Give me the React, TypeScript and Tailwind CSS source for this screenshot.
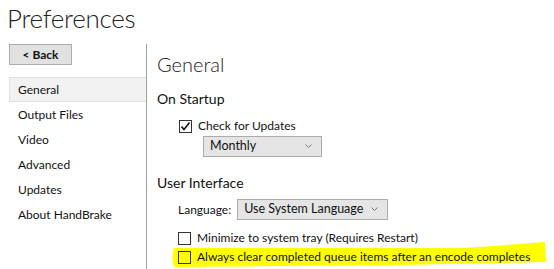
import React from "react";

const font = { fontFamily: 'Lato, "Noto Sans", sans-serif' };

function Check({ checked }: { checked?: boolean }) {
  return (
    <div className="w-[13px] h-[13px] border border-[#333] flex items-center justify-center shrink-0">
      {checked && (
        <svg width="11" height="11" viewBox="0 0 11 11">
          <path d="M1.5 5.5 L4 8.5 L9.5 1.5" fill="none" stroke="#111" strokeWidth="1.6" />
        </svg>
      )}
    </div>
  );
}

function Select({ label, w }: { label: string; w: string }) {
  return (
    <div className={`${w} h-[21px] bg-[#e5e5e5] border border-[#acacac] flex items-center justify-between pl-[6px] pr-[9px] text-[12.5px] text-[#111] whitespace-nowrap`}>
      <span>{label}</span>
      <svg width="7" height="5" viewBox="0 0 7 5">
        <path d="M0.5 0.5 L3.5 3.5 L6.5 0.5" fill="none" stroke="#777" strokeWidth="1" />
      </svg>
    </div>
  );
}

export default function App() {
  const items = ["General", "Output Files", "Video", "Advanced", "Updates", "About HandBrake"];
  return (
    <div className="relative w-[554px] h-[269px] bg-white overflow-hidden text-[#111] whitespace-nowrap" style={font}>
      <svg className="absolute left-0 top-0" width="554" height="269" viewBox="0 0 554 269">
        <path d="M174 248 L465 248 L545 242 L546 262 L400 265 L174 267 Q171 257 174 248 Z" fill="#ffff00" />
      </svg>
      <div className="relative">
        <div className="pl-[7px] pt-[1px] h-[44px] text-[26px] tracking-[-0.3px] font-light leading-[34px] text-[#222]">Preferences</div>
        <div className="flex h-[225px]">
          <div className="w-[147px] border-r border-[#a0a0a0] pl-[9px]">
            <div className="w-[63px] h-[21px] bg-[#e1e1e1] border border-[#adadad] flex items-center justify-center text-[12px] font-bold">
              &lt; Back
            </div>
            <div className="mt-[12px] flex flex-col">
              {items.map((it, i) => (
                <div
                  key={it}
                  className={
                    i === 0
                      ? "h-[25px] bg-[#f2f2f2] border border-r-0 border-[#e0e0e0] flex items-center pl-[8px] text-[12px]"
                      : "h-[25px] flex items-center pl-[9px] text-[12px]"
                  }
                >
                  {it}
                </div>
              ))}
            </div>
          </div>
          <div className="pl-[10px] pt-[6px] flex-1">
            <div className="text-[20px] font-light leading-[28px] text-[#222]">General</div>
            <div className="mt-[11px] text-[14px] leading-[20px]">On Startup</div>
            <div className="mt-[9px] ml-[22px] flex items-center gap-[6px] text-[12px] leading-[16px]">
              <Check checked />
              <span>Check for Updates</span>
            </div>
            <div className="mt-[2px] ml-[46px]">
              <Select label="Monthly" w="w-[119px]" />
            </div>
            <div className="mt-[16px] text-[14px] leading-[20px]">User Interface</div>
            <div className="mt-[6px] ml-[21px] flex items-center gap-[6px] text-[12px]">
              <span>Language:</span>
              <Select label="Use System Language" w="w-[151px]" />
            </div>
            <div className="mt-[9px] ml-[21px] flex items-center gap-[6px] text-[12px] leading-[18px]">
              <Check />
              <span>Minimize to system tray (Requires Restart)</span>
            </div>
            <div className="mt-[1px] ml-[21px] flex items-center gap-[6px] text-[12px] leading-[18px]">
              <Check />
              <span>Always clear completed queue items after an encode completes</span>
            </div>
          </div>
        </div>
      </div>
    </div>
  );
}
